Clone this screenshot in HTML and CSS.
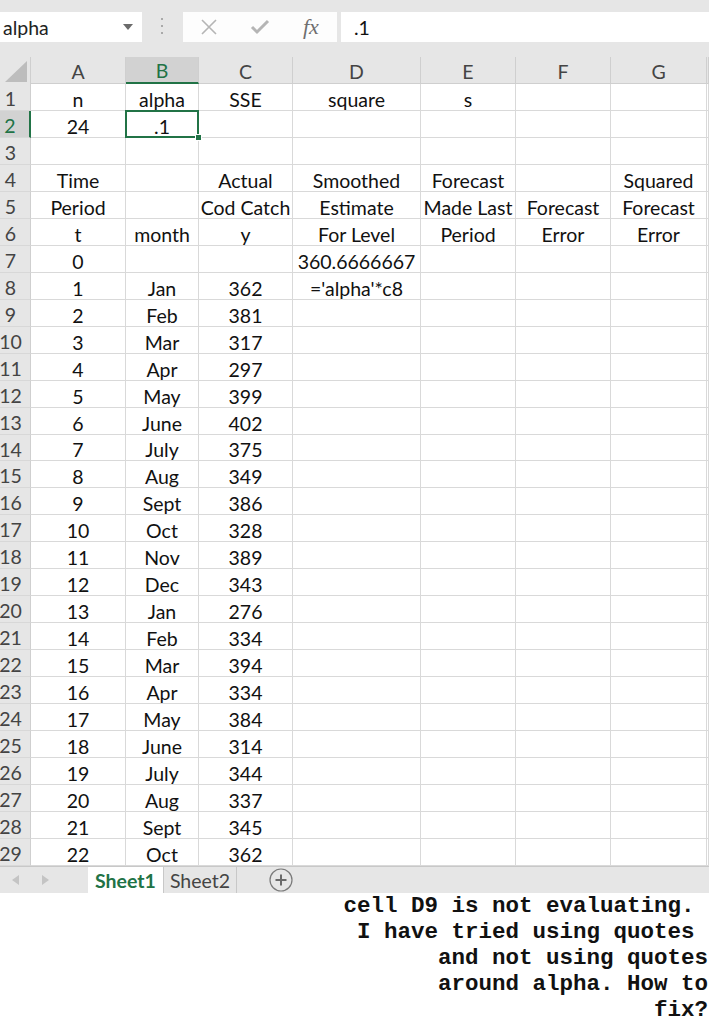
FILE: index.html
```html
<!DOCTYPE html>
<html lang="en">

<head>
    <meta charset="UTF-8">
    <meta name="viewport" content="width=device-width, initial-scale=1.0">
    <title>Exponential smoothing</title>
    <link rel="stylesheet" href="styles.css">
</head>

<body>
    <div class="formula-bar">
        <div class="name-box">
            <span>alpha</span>
            <svg class="name-arrow" width="10" height="6" viewBox="0 0 10 6"><path d="M0 0h10L5 6z" fill="#6b6b6b" /></svg>
        </div>
        <div class="grip"><i></i><i></i><i></i></div>
        <div class="fx-box">
            <svg width="18" height="18" viewBox="0 0 18 18"><path d="M2 2l14 14M16 2L2 16" stroke="#b5b5b5" stroke-width="1.6" fill="none" /></svg>
            <svg width="20" height="18" viewBox="0 0 20 18"><path d="M2 9l5 5L18 3" stroke="#b5b5b5" stroke-width="3" fill="none" /></svg>
            <span class="fx">fx</span>
        </div>
        <div class="formula-input">.1</div>
    </div>

    <div id="sheet" class="sheet">
        <!-- filled from js -->
    </div>

    <div class="tabs">
        <div class="tab-nav">
            <svg width="7" height="10" viewBox="0 0 7 10"><path d="M7 0v10L0 5z" fill="#c4c4c4" /></svg>
            <svg width="7" height="10" viewBox="0 0 7 10"><path d="M0 0v10l7-5z" fill="#c4c4c4" /></svg>
        </div>
        <div class="tab active">Sheet1</div>
        <div class="tab">Sheet2</div>
        <div class="tab-add">
            <svg width="24" height="24" viewBox="0 0 24 24">
                <circle cx="12" cy="12" r="11" stroke="#7a7a7a" stroke-width="1.2" fill="none" />
                <path d="M12 6.5v11M6.5 12h11" stroke="#6a6a6a" stroke-width="2" />
            </svg>
        </div>
    </div>

    <div class="question">
        <p>cell D9 is not evaluating. </p>
        <p>I have tried using quotes </p>
        <p>and not using quotes</p>
        <p>around alpha. How to</p>
        <p>fix?</p>
    </div>

    <script>
        const columns = ['A', 'B', 'C', 'D', 'E', 'F', 'G', '']

        const rows = [
            ['n', 'alpha', 'SSE', 'square', 's', '', ''],
            ['24', '.1', '', '', '', '', ''],
            ['', '', '', '', '', '', ''],
            ['Time', '', 'Actual', 'Smoothed', 'Forecast', '', 'Squared'],
            ['Period', '', 'Cod Catch', 'Estimate', 'Made Last', 'Forecast', 'Forecast'],
            ['t', 'month', 'y', 'For Level', 'Period', 'Error', 'Error'],
            ['0', '', '', '360.6666667', '', '', '']
        ]

        const months = ['Jan', 'Feb', 'Mar', 'Apr', 'May', 'June', 'July', 'Aug', 'Sept', 'Oct', 'Nov', 'Dec',
            'Jan', 'Feb', 'Mar', 'Apr', 'May', 'June', 'July', 'Aug', 'Sept', 'Oct']
        const catches = [362, 381, 317, 297, 399, 402, 375, 349, 386, 328, 389, 343,
            276, 334, 394, 334, 384, 314, 344, 337, 345, 362]

        months.forEach((month, i) => {
            rows.push([String(i + 1), month, String(catches[i]), i === 0 ? "='alpha'*c8" : '', '', '', ''])
        })

        const renderSheet = () => {
            let html = '<div class="corner"></div>'
            columns.forEach((col, i) => {
                html += `<div class="col-head${i === 1 ? ' selected' : ''}">${col}</div>`
            })
            rows.forEach((row, r) => {
                const num = r + 1
                html += `<div class="row-head${num === 2 ? ' selected' : ''}">${num}</div>`
                row.forEach((value, c) => {
                    const active = num === 2 && c === 1 ? ' active' : ''
                    html += `<div class="cell${active}">${value}</div>`
                })
                html += '<div class="cell"></div>'
            })
            document.querySelector('#sheet').innerHTML = html
        }
        renderSheet()
    </script>
</body>

</html>
```

FILE: styles.css
```css
body,
html {
    margin: 0;
}

body {
    width: 709px;
    background-color: white;
    font-family: 'Lato', sans-serif;
    color: #111;
    overflow: hidden;
}

/* formula bar */

.formula-bar {
    display: flex;
    align-items: flex-start;
    height: 57px;
    padding-top: 12px;
    box-sizing: border-box;
    background-color: #e6e6e6;
}

.name-box {
    display: flex;
    align-items: center;
    justify-content: space-between;
    width: 142px;
    height: 30px;
    padding: 0 9px 0 3px;
    box-sizing: border-box;
    background-color: #fff;
    font-size: 19.5px;
    color: #222;
}

.grip {
    display: flex;
    flex-direction: column;
    gap: 5px;
    margin: 6px 20px 0 19px;
}

.grip i {
    width: 2px;
    height: 2px;
    background-color: #a9a9a9;
}

.fx-box {
    display: flex;
    align-items: center;
    width: 154px;
    height: 30px;
    padding-left: 17px;
    box-sizing: border-box;
    background-color: #fdfdfd;
}

.fx-box svg + svg {
    margin-left: 32px;
}

.fx {
    margin-left: 33px;
    font-family: 'Liberation Serif', serif;
    font-style: italic;
    font-size: 22px;
    color: #6f6f6f;
}

.formula-input {
    flex: 1;
    height: 30px;
    margin-left: 4px;
    padding-left: 13px;
    line-height: 31px;
    background-color: #fff;
    font-size: 19.5px;
}

/* grid */

.sheet {
    display: grid;
    grid-template-columns: 31px 95px 73px 94px 128px 95px 95px 96px 1fr;
    grid-template-rows: repeat(14, 27px) 26px repeat(15, 27px);
    height: 809px;
    overflow: hidden;
    background-color: #fff;
}

.corner {
    position: relative;
    background-color: #e6e6e6;
    border-right: 1px solid #cfcfcf;
}

.corner::after {
    content: '';
    position: absolute;
    right: 3px;
    bottom: 2px;
    border-left: 22px solid transparent;
    border-bottom: 21px solid #bdbdbd;
}

.col-head {
    display: flex;
    align-items: center;
    justify-content: center;
    padding-top: 2px;
    box-sizing: border-box;
    background-color: #e6e6e6;
    border-right: 1px solid #cfcfcf;
    border-bottom: 1px solid #cfcfcf;
    font-size: 19.5px;
    color: #444;
}

.col-head.selected {
    background-color: #d2d2d2;
    color: #217346;
    border-bottom: 2px solid #217346;
}

.row-head {
    display: flex;
    align-items: center;
    justify-content: center;
    padding: 3px 9px 0 0;
    box-sizing: border-box;
    background-color: #e6e6e6;
    border-right: 1px solid #cfcfcf;
    border-bottom: 1px solid #d8d8d8;
    font-size: 19.5px;
    color: #444;
}

.row-head.selected {
    background-color: #d2d2d2;
    color: #217346;
    border-right: 2px solid #217346;
}

.cell {
    display: flex;
    align-items: center;
    justify-content: center;
    padding-top: 4px;
    box-sizing: border-box;
    border-right: 1px solid #d9d9d9;
    border-bottom: 1px solid #d9d9d9;
    font-size: 19.5px;
    white-space: nowrap;
}

.cell.active {
    position: relative;
}

.cell.active::before {
    content: '';
    position: absolute;
    top: -1px;
    left: -1px;
    right: -1px;
    bottom: -1px;
    border: 2px solid #217346;
}

.cell.active::after {
    content: '';
    position: absolute;
    right: -4px;
    bottom: -4px;
    width: 5px;
    height: 5px;
    background-color: #217346;
    border: 1px solid #fff;
}

/* sheet tabs */

.tabs {
    display: flex;
    align-items: stretch;
    height: 27px;
    box-sizing: border-box;
    background-color: #e6e6e6;
    border-top: 1px solid #c8c8c8;
}

.tab-nav {
    display: flex;
    align-items: center;
    gap: 23px;
    width: 88px;
    padding-left: 12px;
    box-sizing: border-box;
}

.tab {
    display: flex;
    align-items: center;
    justify-content: center;
    width: 72px;
    border-right: 1px solid #c8c8c8;
    font-size: 19.5px;
    color: #444;
}

.tab.active {
    width: 75px;
    background-color: #fff;
    font-weight: bold;
    color: #217346;
}

.tab-add {
    display: flex;
    align-items: center;
    margin-left: 32px;
}

/* question text */

.question {
    padding-right: 1px;
    font-family: 'Liberation Mono', monospace;
    font-weight: bold;
    font-size: 22.5px;
    line-height: 26px;
    text-align: right;
    color: #111;
}

.question p {
    margin: 0;
    white-space: pre;
}
```
